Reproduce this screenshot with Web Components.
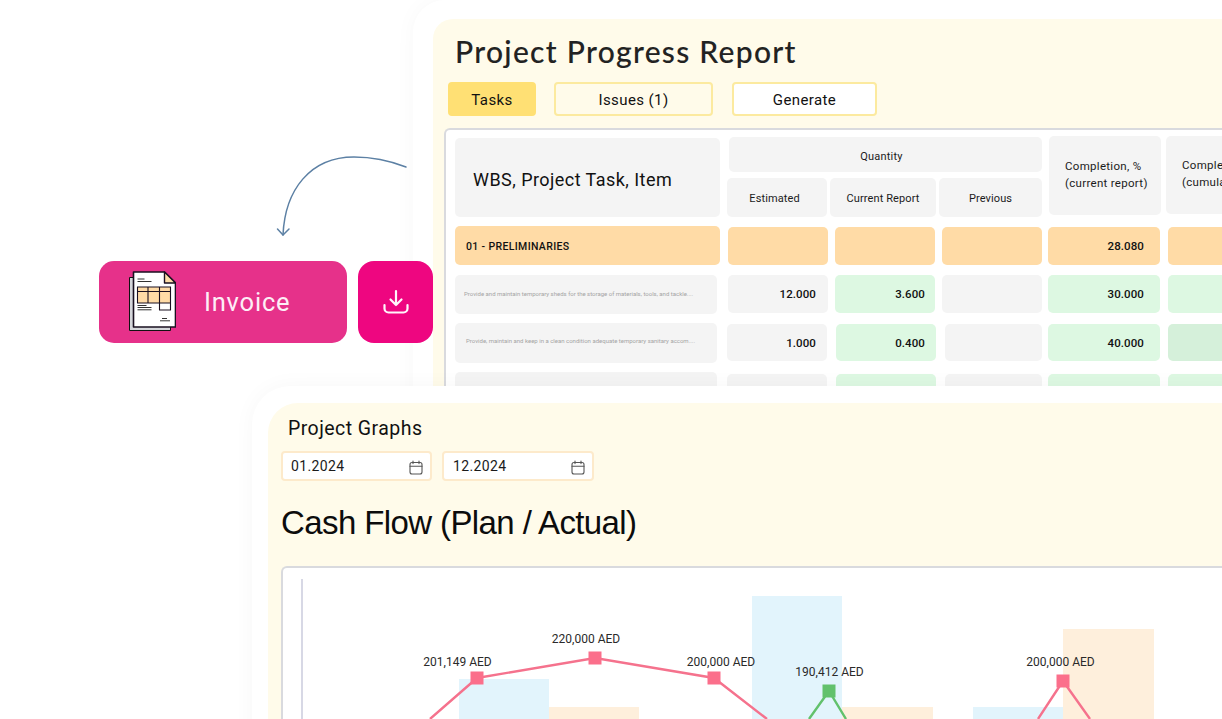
<!DOCTYPE html>
<html lang="en">
<head>
<meta charset="utf-8">
<title>Project reports</title>
<style>
  html, body { margin: 0; height: 100%; background: #fff; overflow: hidden; }
  body { position: relative; width: 1222px; height: 719px; font-family: Roboto, sans-serif; color: #1b1b1b; }
</style>
</head>
<body>
<report-window></report-window>
<invoice-actions></invoice-actions>
<graphs-window></graphs-window>
<flow-arrow></flow-arrow>

<script>
/* table cell: tone picks the fill, x positions come from the row */
class ReportCell extends HTMLElement {
  constructor() {
    super();
    this.attachShadow({ mode: 'open' }).innerHTML = `
      <style>
        :host {
          display: flex;
          align-items: center;
          box-sizing: border-box;
          flex: none;
          border-radius: 5px;
          background: #f4f4f4;
          font-size: 11.5px;
          letter-spacing: .3px;
          white-space: nowrap;
          overflow: hidden;
        }
        :host([tone="head"]) { background: #ffdba6; }
        :host([tone="ok"]) { background: #ddf8e2; }
        :host([tone="ok2"]) { background: #d5f0da; }
        :host([align="end"]) { justify-content: flex-end; font-size: 11.5px; font-weight: 500; letter-spacing: .1px; color: #111; }
      </style>
      <slot></slot>`;
  }
}
customElements.define('report-cell', ReportCell);

class TabButton extends HTMLElement {
  constructor() {
    super();
    this.attachShadow({ mode: 'open' }).innerHTML = `
      <style>
        :host {
          display: flex;
          align-items: center;
          justify-content: center;
          box-sizing: border-box;
          height: 34px;
          padding-top: 2px;
          border: 2px solid #fcea9f;
          border-radius: 4px;
          font-size: 15px;
          letter-spacing: .4px;
          color: #111;
        }
        :host([active]) { background: #ffe074; border-color: #ffe074; }
        :host([plain]) { background: #fff; }
      </style>
      <slot></slot>`;
  }
}
customElements.define('tab-button', TabButton);

class ReportWindow extends HTMLElement {
  constructor() {
    super();
    // [left edge, right edge, text, tone, kind, right padding], page coordinates, the source is not on a clean grid
    const rows = [
      { top: 9, h: 39, ot: 1, oh: 38, cells: [[455, 720, '01 - PRELIMINARIES', 'head', 'title'], [728, 828, '', 'head'], [835, 935, '', 'head'], [942, 1042, '', 'head'], [1048, 1160, '28.080', 'head', 'end', 16], [1168, 1240, '', 'head']] },
      { top: 10, h: 39, ot: 0, oh: 38, cells: [[455, 717, 'Provide and maintain temporary sheds for the storage of materials, tools, and tackle....', '', 'desc'], [728, 828, '12.000', '', 'end', 12], [835, 935, '3.600', 'ok', 'end', 10], [942, 1042, ''], [1048, 1160, '30.000', 'ok', 'end', 16], [1168, 1240, '', 'ok']] },
      { top: 9, h: 40, ot: 1, oh: 37, cells: [[455, 717, 'Provide, maintain and keep in a clean condition adequate temporary sanitary accom....', '', 'desc d2'], [727, 827, '1.000', '', 'end', 11], [836, 936, '0.400', 'ok', 'end', 11], [945, 1042, ''], [1048, 1160, '40.000', 'ok', 'end', 16], [1168, 1240, '', 'ok2']] },
      { top: 9, h: 40, ot: 2, oh: 38, cells: [[455, 717, ''], [727, 827, ''], [836, 936, '', 'ok'], [945, 1042, ''], [1048, 1160, '', 'ok'], [1168, 1240, '', 'ok']] }
    ];
    const body = rows.map(r => {
      let x = 455;
      return `<div class="row" style="margin-top:${r.top}px;height:${r.h}px">` + r.cells.map((c, i) => {
        const m = c[0] - x;
        x = c[1];
        const box = i === 0 ? `height:${r.h}px` : `height:${r.oh}px;margin-top:${r.ot}px`;
        const kind = c[4] && c[4] !== 'end' ? c[4] : '';
        const attrs = `${c[3] ? `tone="${c[3]}"` : ''} ${c[4] === 'end' ? 'align="end"' : ''}`;
        return `<report-cell ${attrs} style="margin-left:${m}px;width:${c[1] - c[0]}px;${box};padding-right:${c[5] || 0}px">${kind ? `<span class="${kind}">${c[2]}</span>` : c[2]}</report-cell>`;
      }).join('') + '</div>';
    }).join('');

    this.attachShadow({ mode: 'open' }).innerHTML = `
      <style>
        :host {
          display: block;
          position: absolute;
          left: 413px;
          top: 0;
          width: 840px;
          height: 420px;
          box-sizing: border-box;
          padding: 19px 0 0 20px;
          background: #fff;
          border-radius: 32px 0 0 0;
          box-shadow: 0 0 22px rgba(40, 40, 60, .03);
        }
        .panel {
          height: 100%;
          padding: 0 0 0 11px;
          box-sizing: border-box;
          background: #fffbea;
          border-radius: 20px 0 0 0;
        }
        h1 {
          margin: 0;
          padding: 13px 0 0 11px;
          height: 50px;
          box-sizing: border-box;
          font: 500 30px/38px Lato, sans-serif;
          letter-spacing: 1.3px;
          -webkit-text-stroke: .1px #222;
          color: #222;
        }
        .tabs { display: flex; margin: 13px 0 0 4px; }
        .tabs tab-button:nth-child(1) { width: 88px; }
        .tabs tab-button:nth-child(2) { width: 159px; margin-left: 18px; }
        .tabs tab-button:nth-child(3) { width: 145px; margin-left: 19px; }
        .table {
          margin-top: 12px;
          height: 300px;
          width: 820px;
          box-sizing: border-box;
          background: #fff;
          border: 2px solid #d9dade;
          border-right: 0;
          border-radius: 6px 0 0 0;
          padding-left: 9px;
        }
        .header { display: flex; height: 81px; padding-top: 6px; }
        .wbs { width: 265px; height: 79px; margin-top: 2px; padding: 3px 0 0 18px; font-size: 18px; letter-spacing: .45px; color: #111; }
        .group { width: 316px; margin-left: 7px; display: flex; flex-direction: column; }
        .qty { height: 35px; margin: 1px 0 0 2px; width: 313px; justify-content: center; padding: 4px 8px 0 0; font-size: 11px; letter-spacing: .2px; }
        .sub { display: flex; margin-top: 6px; }
        .sub report-cell { height: 39px; padding-top: 2px; justify-content: center; font-size: 11px; letter-spacing: .1px; }
        .pct { width: 112px; height: 79px; margin-left: 6px; padding: 0 0 2px 16px; line-height: 17px; }
        .pct.last { width: 80px; height: 78px; margin-left: 5px; }
        .row { display: flex; }
        .title { padding: 2px 0 0 11px; font-size: 10.5px; font-weight: 500; letter-spacing: .35px; color: #111; }
        .desc { padding: 0 0 2px 9px; font-size: 6px; letter-spacing: 0; color: #a4a4a4; }
        .d2 { padding: 0 0 6px 11px; }
      </style>
      <div class="panel">
        <h1>Project Progress Report</h1>
        <div class="tabs">
          <tab-button active>Tasks</tab-button>
          <tab-button>Issues (1)</tab-button>
          <tab-button plain>Generate</tab-button>
        </div>
        <div class="table">
          <div class="header">
            <report-cell class="wbs">WBS, Project Task, Item</report-cell>
            <div class="group">
              <report-cell class="qty">Quantity</report-cell>
              <div class="sub">
                <report-cell style="width:100px;padding-right:5px">Estimated</report-cell>
                <report-cell style="width:106px;margin-left:3px">Current Report</report-cell>
                <report-cell style="width:103px;margin-left:3px">Previous</report-cell>
              </div>
            </div>
            <report-cell class="pct"><span>Completion, %<br>(current report)</span></report-cell>
            <report-cell class="pct last"><span>Completion, %<br>(cumulative)</span></report-cell>
          </div>
          ${body}
        </div>
      </div>`;
  }
}
customElements.define('report-window', ReportWindow);

class InvoiceActions extends HTMLElement {
  constructor() {
    super();
    this.attachShadow({ mode: 'open' }).innerHTML = `
      <style>
        :host { display: flex; position: absolute; left: 99px; top: 261px; gap: 11px; z-index: 2; }
        .invoice {
          display: flex;
          align-items: center;
          box-sizing: border-box;
          width: 248px;
          height: 82px;
          padding-left: 29px;
          background: #e6318a;
          border-radius: 15px;
          color: #fdeef6;
          font-size: 25.500px;
          letter-spacing: .8px;
        }
        .invoice span { margin-left: 28px; }
        .get {
          display: flex;
          align-items: center;
          justify-content: center;
          width: 75px;
          height: 82px;
          background: #ee0680;
          border-radius: 16px;
        }
        svg { display: block; }
      </style>
      <div class="invoice">
        <svg width="48" height="62" viewBox="0 0 48 62">
          <path d="M1.500 6.500h41v53h-41z" fill="#d5d6da" stroke="#111" stroke-width="1"/>
          <path d="M5.500 1h31l11 11v44h-42z" fill="#fff" stroke="#1a1020" stroke-width="1.600" stroke-linejoin="round"/>
          <path d="M36.500 1v11h11z" fill="#ffdfa8" stroke="#1a1020" stroke-width="1.400" stroke-linejoin="round"/>
          <path d="M9.500 16h33v16h-33z" fill="#ffdba6"/>
          <path d="M31.500 32h11v7h-11z" fill="#fff"/>
          <path d="M9.500 16h33v16h-33zM9.500 20.500h33M20 16v16M31.500 16v23h11v-7" fill="none" stroke="#1a1020" stroke-width="1.100"/>
          <path d="M9.500 8h7M9.500 10.500h14M9.500 34.500h9M9.500 36.500h14M9.500 38.800h14M34 47.500h5M32 49.800h10" stroke="#333" stroke-width="1" fill="none"/>
        </svg>
        <span>Invoice</span>
      </div>
      <div class="get">
        <svg width="26" height="26" viewBox="0 0 26 26" fill="none" stroke="#fff6fb" stroke-width="2.200" stroke-linecap="round" stroke-linejoin="round">
          <path d="M13 2v14M7.500 10.500 13 16l5.500-5.500"/>
          <path d="M1.500 16v3.500a4 4 0 0 0 4 4h15a4 4 0 0 0 4-4V16"/>
        </svg>
      </div>`;
  }
}
customElements.define('invoice-actions', InvoiceActions);

class DateField extends HTMLElement {
  constructor() {
    super();
    this.attachShadow({ mode: 'open' }).innerHTML = `
      <style>
        :host {
          display: flex;
          align-items: center;
          justify-content: space-between;
          box-sizing: border-box;
          width: 151px;
          height: 30px;
          padding: 0 7px 0 8px;
          background: #fff;
          border: 2px solid #fdeacb;
          border-radius: 4px;
          font-size: 14px;
          letter-spacing: .35px;
        }
        :host(:last-child) { width: 152px; padding-left: 9px; }
        svg { display: block; margin-top: 2px; }
      </style>
      <slot></slot>
      <svg width="14" height="15" viewBox="0 0 14 15" fill="none" stroke="#555" stroke-width="1.100" stroke-linecap="round">
        <rect x="1" y="2.500" width="12" height="11.500" rx="2"/>
        <path d="M1 6.200h12M4 1v2.600M10 1v2.600"/>
      </svg>`;
  }
}
customElements.define('date-field', DateField);

class CashChart extends HTMLElement {
  constructor() {
    super();
    // kept in page coordinates through the viewBox, so values read the same as in the reference
    const bars = [
      [459, 679, 90, '#e2f4fc'], [549, 707, 90, '#feefdc'],
      [752, 596, 90, '#e2f4fc'], [842, 707, 91, '#feefdc'],
      [973, 707, 90, '#e2f4fc'], [1063, 629, 91, '#feefdc']
    ];
    const labels = [
      [457.500, 666, '201,149 AED'], [586, 643, '220,000 AED'], [721, 666, '200,000 AED'],
      [829.500, 676, '190,412 AED'], [1060.500, 666, '200,000 AED']
    ];
    const squares = [
      [477, 678, '#fb6f8b'], [595, 658, '#fb6f8b'], [714, 678, '#fb6f8b'],
      [829, 691, '#62c16c'], [1063, 681, '#fb6f8b']
    ];
    this.attachShadow({ mode: 'open' }).innerHTML = `
      <style>
        :host {
          display: block;
          width: 960px;
          height: 170px;
          box-sizing: border-box;
          background: #fff;
          border: 2px solid #d9dade;
          border-right: 0;
          border-radius: 6px 0 0 0;
          overflow: hidden;
        }
        svg { display: block; }
        text { font: 12px Roboto, sans-serif; fill: #2a2a2a; text-anchor: middle; }
      </style>
      <svg width="958" height="168" viewBox="283 568 958 168" fill="none">
        <path d="M302 579V730" stroke="#d7d8e5" stroke-width="2"/>
        ${bars.map(b => `<rect x="${b[0]}" y="${b[1]}" width="${b[2]}" height="${730 - b[1]}" fill="${b[3]}"/>`).join('')}
        <path d="M430 719 477 678 595 658 714 678 767 719M1038 719 1063 681 1090 719" stroke="#f5728d" stroke-width="2.400"/>
        <path d="M809 719 829 691 846 719" stroke="#62c16c" stroke-width="2.400"/>
        ${squares.map(s => `<rect x="${s[0] - 6.5}" y="${s[1] - 6.5}" width="13" height="13" fill="${s[2]}"/>`).join('')}
        ${labels.map(l => `<text x="${l[0]}" y="${l[1]}">${l[2]}</text>`).join('')}
      </svg>`;
  }
}
customElements.define('cash-chart', CashChart);

class GraphsWindow extends HTMLElement {
  constructor() {
    super();
    this.attachShadow({ mode: 'open' }).innerHTML = `
      <style>
        :host {
          display: block;
          position: absolute;
          left: 252px;
          top: 386px;
          width: 1000px;
          height: 360px;
          box-sizing: border-box;
          padding: 17px 0 0 16px;
          background: #fff;
          border-radius: 38px 0 0 0;
          box-shadow: 0 0 22px rgba(40, 40, 60, .035);
          z-index: 1;
        }
        .panel {
          height: 100%;
          box-sizing: border-box;
          padding: 0 0 0 13px;
          background: #fffbea;
          border-radius: 30px 0 0 0;
        }
        h2 { margin: 0; padding: 13px 0 0 7px; font-size: 19.500px; line-height: 26px; font-weight: 400; letter-spacing: .45px; color: #111; }
        .dates { display: flex; gap: 10px; margin-top: 9px; }
        h3 {
          margin: 22px 0 0;
          font: 400 33px/40px "Liberation Sans", sans-serif;
          letter-spacing: -.6px;
          color: #0c0c0c;
        }
        cash-chart { margin-top: 23px; }
      </style>
      <div class="panel">
        <h2>Project Graphs</h2>
        <div class="dates">
          <date-field>01.2024</date-field>
          <date-field>12.2024</date-field>
        </div>
        <h3>Cash Flow (Plan / Actual)</h3>
        <cash-chart></cash-chart>
      </div>`;
  }
}
customElements.define('graphs-window', GraphsWindow);

class FlowArrow extends HTMLElement {
  constructor() {
    super();
    this.attachShadow({ mode: 'open' }).innerHTML = `
      <style>:host { display: block; position: absolute; left: 270px; top: 150px; z-index: 2; }</style>
      <svg width="145" height="92" viewBox="270 150 145 92" fill="none" stroke="#5c80a4" stroke-width="1.500" stroke-linecap="round" stroke-linejoin="round">
        <path d="M406 167C388 160 372 157 354 157 310 157 285 190 283 235"/>
        <path d="M277.500 229 283 235 289 229"/>
      </svg>`;
  }
}
customElements.define('flow-arrow', FlowArrow);
</script>
</body>
</html>
